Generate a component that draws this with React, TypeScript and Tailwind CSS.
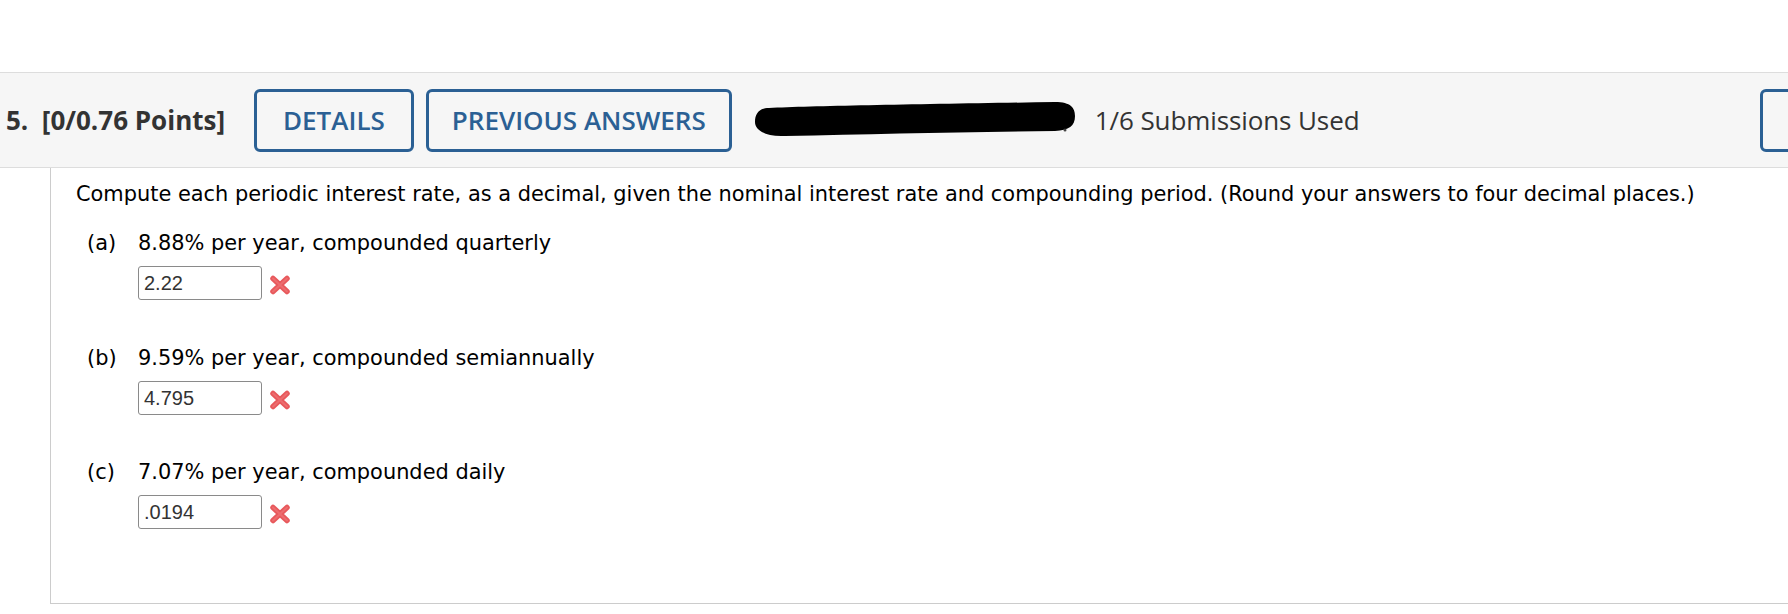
import React from "react";

const PARTS = [
  { label: "(a)", text: "8.88% per year, compounded quarterly", value: "2.22", gap: "mt-[23px]" },
  { label: "(b)", text: "9.59% per year, compounded semiannually", value: "4.795", gap: "mt-[45px]" },
  { label: "(c)", text: "7.07% per year, compounded daily", value: ".0194", gap: "mt-[44px]" },
];

function WrongMark() {
  return (
    <svg width="22" height="20" viewBox="0 0 22 20" className="shrink-0">
      <path d="M4 3.5 L18 16.5 M18 3.5 L4 16.5" stroke="#e8585b" strokeWidth="5.5" strokeLinecap="round" />
      <path d="M4 3.5 L18 16.5 M18 3.5 L4 16.5" stroke="#f07b7d" strokeWidth="2" strokeLinecap="round" opacity="0.6" />
    </svg>
  );
}

function Redaction() {
  return (
    <svg width="322" height="36" viewBox="0 0 322 36" className="shrink-0">
      <path
        d="M14 6 C60 4 180 2 300 0 C316 0 320 6 320 14 C320 24 314 28 300 29 C200 30 120 32 30 34 C10 35 0 28 0 20 C0 12 4 6 14 6 Z"
        fill="#000"
      />
      <circle cx="310" cy="28" r="1.5" fill="#444" />
    </svg>
  );
}

export default function App() {
  return (
    <div className="w-full h-[614px] bg-white overflow-hidden pt-[72px]">
      {/* question header */}
      <div
        className="h-[96px] bg-[#f6f6f6] border-y border-[#dddddd] flex items-center whitespace-nowrap text-[#333]"
        style={{ fontFamily: '"Open Sans", sans-serif' }}
      >
        <span className="pl-[6px] text-[26px] font-bold">5.&nbsp; [0/0.76 Points]</span>
        <button className="ml-[29px] h-[63px] px-[26px] border-[3px] border-[#2b6094] rounded-[6px] text-[26px] font-semibold text-[#2b6094]">
          DETAILS
        </button>
        <button className="ml-[12px] h-[63px] px-[23px] border-[3px] border-[#2b6094] rounded-[6px] text-[26px] font-semibold text-[#2b6094]">
          PREVIOUS ANSWERS
        </button>
        <div className="ml-[23px] flex items-center">
          <Redaction />
        </div>
        <span className="ml-[18px] text-[26px] tracking-[-0.1px]">1/6 Submissions Used</span>
        <button className="ml-[401px] h-[63px] w-[200px] shrink-0 border-[3px] border-[#2b6094] rounded-[6px]" />
      </div>

      {/* question body */}
      <div
        className="ml-[50px] w-[1900px] border-l border-b border-[#cccccc] pl-[25px] pt-[13px] pb-[74px] text-black"
        style={{ fontFamily: '"DejaVu Sans", Verdana, sans-serif' }}
      >
        <p className="text-[20.9px] leading-[26px] whitespace-nowrap">
          Compute each periodic interest rate, as a decimal, given the nominal interest rate and compounding period.
          (Round your answers to four decimal places.)
        </p>
        {PARTS.map((p) => (
          <div key={p.label} className={p.gap}>
            <div className="flex text-[20.9px] leading-[26px] pl-[11px]">
              <span className="w-[51px]">{p.label}</span>
              <span>{p.text}</span>
            </div>
            <div className="mt-[10px] ml-[62px] flex items-center gap-[7px]">
              <div
                className="w-[124px] h-[34px] border border-[#8a8a8a] rounded-[3px] bg-white flex items-center px-[5px] text-[20px] text-[#333]"
                style={{ fontFamily: '"Liberation Sans", Arial, sans-serif' }}
              >
                {p.value}
              </div>
              <div className="mt-[4px]">
                <WrongMark />
              </div>
            </div>
          </div>
        ))}
      </div>
    </div>
  );
}
